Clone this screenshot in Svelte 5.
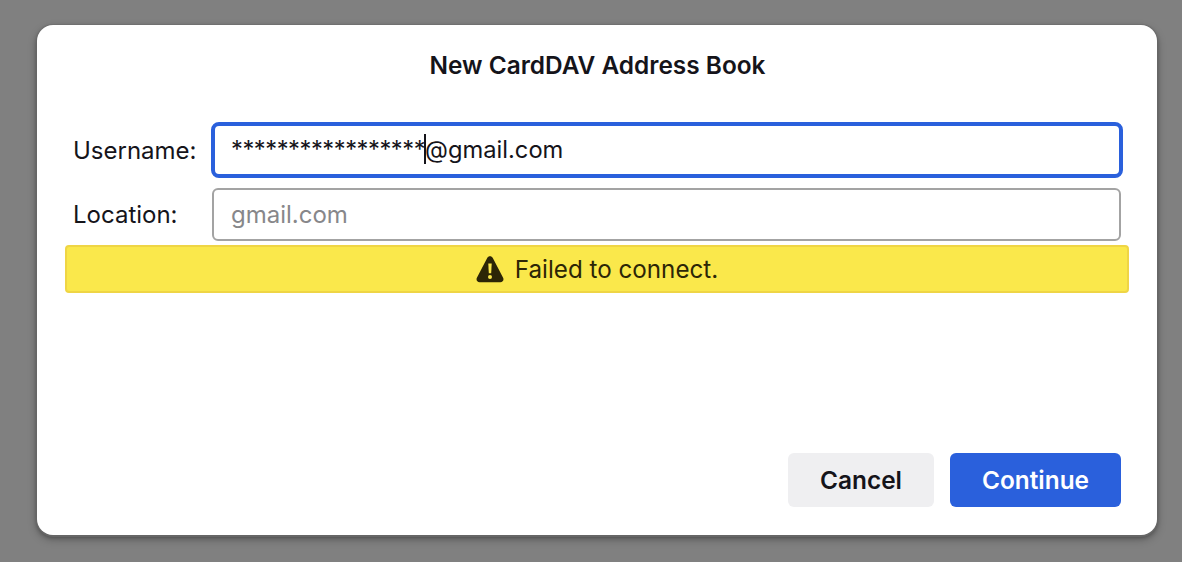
<script>
  let username = '*****************';
</script>

<div class="page">
  <div class="dialog">
    <h1 class="title">New CardDAV Address Book</h1>

    <div class="form">
      <div class="row">
        <label class="label" for="username">Username:</label>
        <div class="input focused" id="username">
          <span class="stars">{username}</span><span class="caret"></span><span>@gmail.com</span>
        </div>
      </div>
      <div class="row">
        <label class="label" for="location">Location:</label>
        <div class="input" id="location">
          <span class="placeholder">gmail.com</span>
        </div>
      </div>
    </div>

    <div class="notification">
      <svg class="warn" width="28" height="28" viewBox="0 0 28 28">
        <path fill="#2c2606" d="M14 1.2c1.2 0 2.2.6 2.8 1.7l10.3 19.900c1.100 2.100-.3 4.500-2.700 4.500H3.600c-2.400 0-3.800-2.400-2.700-4.500L11.200 2.900C11.800 1.800 12.800 1.200 14 1.200z"/>
        <path fill="#fae84b" d="M12.300 8.500h3.400l-.5 9.800h-2.400z"/>
        <circle fill="#fae84b" cx="14" cy="21.900" r="2"/>
      </svg>
      <span>Failed to connect.</span>
    </div>

    <div class="buttons">
      <button class="btn cancel">Cancel</button>
      <button class="btn primary">Continue</button>
    </div>
  </div>
</div>

<style>
  :global(body) {
    margin: 0;
    background: #808080;
  }

  .page {
    height: 562px;
    box-sizing: border-box;
    padding: 25px 25px 27px 37px;
    font-family: Inter, "Liberation Sans", sans-serif;
    color: #15141a;
  }

  .dialog {
    height: 100%;
    box-sizing: border-box;
    background: #fff;
    border-radius: 16px;
    box-shadow: 0 1px 0 1px #666, 0 0 0 1px #707070, 0 2px 4px rgba(0, 0, 0, 0.3), 0 4px 10px rgba(0, 0, 0, 0.3);
    padding: 0 36px 28px 28px;
    display: flex;
    flex-direction: column;
  }

  .title {
    margin: 0;
    padding-top: 26px;
    padding-left: 9px;
    height: 28px;
    line-height: 28px;
    font-size: 24.400px;
    font-weight: 600;
    text-align: center;
  }

  .form {
    margin-top: 43px;
    display: flex;
    flex-direction: column;
    gap: 10px;
  }

  .row {
    display: flex;
    align-items: center;
  }

  .label {
    width: 147px;
    padding-left: 8px;
    box-sizing: border-box;
    font-size: 24px;
  }

  .input {
    flex: 1;
    height: 53px;
    box-sizing: border-box;
    border: 2px solid #a3a3a3;
    border-radius: 6px;
    padding: 0 17px;
    display: flex;
    align-items: center;
    font-size: 24px;
    white-space: nowrap;
  }

  .focused {
    border: 4px solid #2a60dc;
    border-radius: 8px;
    height: 56px;
    margin: 0 -1.500px;
    padding: 0 16.500px 2px;
    font-size: 23.700px;
  }

  .stars {
    letter-spacing: -0.45px;
  }

  .placeholder {
    color: #87878a;
  }

  .caret {
    width: 2px;
    height: 30px;
    background: #15141a;
    margin: 0 -1px;
  }

  .notification {
    margin-top: 4px;
    margin-right: -8px;
    height: 48px;
    box-sizing: border-box;
    background: #fae84b;
    border: 2px solid #efd545;
    border-radius: 4px;
    display: flex;
    align-items: center;
    justify-content: center;
    gap: 11px;
    font-size: 24.200px;
    color: #2c2606;
  }

  .warn {
    flex-shrink: 0;
  }

  .buttons {
    margin-top: auto;
    display: flex;
    justify-content: flex-end;
    gap: 16px;
  }

  .btn {
    height: 54px;
    border: none;
    border-radius: 6px;
    font-family: inherit;
    font-size: 24.400px;
    font-weight: 600;
  }

  .cancel {
    width: 146px;
    background: #efeff1;
    color: #15141a;
  }

  .primary {
    width: 171px;
    background: #2a60dc;
    color: #fff;
  }
</style>
